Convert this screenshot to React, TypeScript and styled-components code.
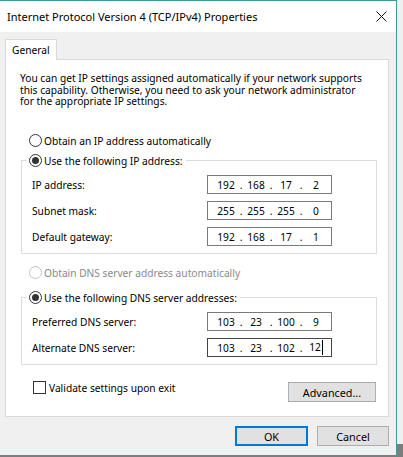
import styled, { createGlobalStyle } from "styled-components";

const GlobalStyle = createGlobalStyle`
  html, body {
    margin: 0;
    padding: 0;
  }
  body {
    min-height: 457px;
    background: linear-gradient(#eef0f0 0, #eef0f0 444px, #7d7d7d 444px);
    font-family: "Noto Sans", "Liberation Sans", sans-serif;
    font-size: 10.2px;
    color: #000;
  }
`;

const Window = styled.div`
  width: 396px;
  height: 454px;
  border-top: 1px solid #3b9a9a;
  border-right: 1px solid #3b9a9a;
  border-bottom: 1px solid #3b9a9a;
  background: #f0f0f0;
  display: flex;
  flex-direction: column;
`;

const TitleBar = styled.div`
  height: 31px;
  flex: 0 0 31px;
  background: #fff;
  display: flex;
  align-items: center;
  justify-content: space-between;
  padding: 0 9px 0 7px;
  box-sizing: border-box;
`;

const Title = styled.span`
  font-size: 11px;
  line-height: 1;
`;

const Body = styled.div`
  flex: 1;
  display: flex;
  flex-direction: column;
  padding: 7px 7px 0 5px;
`;

const TabStrip = styled.div`
  display: flex;
`;

const Tab = styled.div`
  box-sizing: border-box;
  width: 52px;
  height: 21px;
  border: 1px solid #d9d9d9;
  border-bottom: none;
  background: #fff;
  margin-bottom: -1px;
  position: relative;
  z-index: 1;
  padding-left: 6px;
  display: flex;
  align-items: center;
`;

const Panel = styled.div`
  box-sizing: border-box;
  height: 358px;
  border: 1px solid #d9d9d9;
  background: #fff;
  display: flex;
  flex-direction: column;
`;

const Intro = styled.p`
  margin: 13px 0 0 14px;
  line-height: 11.7px;
  white-space: nowrap;
`;

const Choice = styled.label<{ $top: number; $disabled?: boolean }>`
  display: flex;
  align-items: center;
  gap: 2px;
  height: 13px;
  margin: ${(p) => p.$top}px 0 0 23px;
  color: ${(p) => (p.$disabled ? "#8a8a8a" : "#000")};
`;

const Radio = styled.span<{ $checked?: boolean; $disabled?: boolean }>`
  box-sizing: border-box;
  width: 13px;
  height: 13px;
  border-radius: 50%;
  border: 1px solid ${(p) => (p.$disabled ? "#c4c4c4" : "#333")};
  background: #fff;
  display: flex;
  align-items: center;
  justify-content: center;

  &::after {
    content: "";
    width: 7px;
    height: 7px;
    border-radius: 50%;
    background: #333;
    display: ${(p) => (p.$checked ? "block" : "none")};
  }
`;

const Group = styled.fieldset<{ $top: number }>`
  margin: ${(p) => p.$top}px 0 0 15px;
  width: 356px;
  box-sizing: border-box;
  border: 1px solid #dcdcdc;
  padding: 0 0 7px 10px;
  min-width: 0;
`;

const Legend = styled.legend`
  margin-left: -5px;
  padding: 0 3px 0 2px;
  display: flex;
  align-items: center;
  gap: 2px;
  height: 13px;
`;

const Rows = styled.div<{ $top: number }>`
  display: flex;
  flex-direction: column;
  gap: 7px;
  margin-top: ${(p) => p.$top}px;
`;

const Row = styled.div`
  display: flex;
  align-items: center;
  height: 19px;
`;

const FieldLabel = styled.span`
  flex: 0 0 175px;
`;

const IpBox = styled.div<{ $focused?: boolean }>`
  box-sizing: border-box;
  width: 125px;
  height: 19px;
  border: 1px solid ${(p) => (p.$focused ? "#444" : "#7a7a7a")};
  background: #fff;
  display: flex;
  align-items: center;
  padding-left: 6px;
`;

const Octet = styled.span`
  width: 24px;
  text-align: center;
  white-space: nowrap;
`;

const Dot = styled.span`
  width: 6px;
  text-align: center;
`;

const Caret = styled.span`
  display: inline-block;
  width: 1px;
  height: 15px;
  background: #000;
  vertical-align: middle;
  margin-left: 1px;
`;

const BottomRow = styled.div`
  display: flex;
  align-items: flex-start;
  justify-content: space-between;
  margin: 16px 12px 0 27px;
`;

const CheckRow = styled.label`
  display: flex;
  align-items: center;
  gap: 3px;
  height: 13px;
`;

const CheckBox = styled.span`
  box-sizing: border-box;
  width: 13px;
  height: 13px;
  border: 1px solid #333;
  background: #fff;
`;

const Button = styled.button<{ $default?: boolean; $width: number }>`
  box-sizing: border-box;
  width: ${(p) => p.$width}px;
  height: 20px;
  border: ${(p) => (p.$default ? "2px solid #0078d7" : "1px solid #adadad")};
  background: #e1e1e1;
  font-family: inherit;
  font-size: 10.8px;
  color: #000;
  padding: 0;
  margin-top: 1px;
`;

const Footer = styled.div`
  display: flex;
  justify-content: flex-end;
  gap: 9px;
  margin-top: 8px;
`;

function CloseIcon() {
  return (
    <svg width="11" height="11" viewBox="0 0 11 11">
      <path d="M0.5 0.5 L10.5 10.5 M10.5 0.5 L0.5 10.5" stroke="#111" strokeWidth="1" />
    </svg>
  );
}

function IpField({ value, focused }: { value: string; focused?: boolean }) {
  const parts = value.split(".");
  return (
    <IpBox $focused={focused}>
      {parts.map((part, i) => (
        <span key={i} style={{ display: "contents" }}>
          {i > 0 && <Dot>.</Dot>}
          <Octet>
            {part}
            {focused && i === parts.length - 1 && <Caret />}
          </Octet>
        </span>
      ))}
    </IpBox>
  );
}

const ipRows = [
  { label: "IP address:", value: "192.168.17.2" },
  { label: "Subnet mask:", value: "255.255.255.0" },
  { label: "Default gateway:", value: "192.168.17.1" },
];

const dnsRows = [
  { label: "Preferred DNS server:", value: "103.23.100.9" },
  { label: "Alternate DNS server:", value: "103.23.102.12", focused: true },
];

export default function App() {
  return (
    <>
      <GlobalStyle />
      <Window>
        <TitleBar>
          <Title>Internet Protocol Version 4 (TCP/IPv4) Properties</Title>
          <CloseIcon />
        </TitleBar>
        <Body>
          <TabStrip>
            <Tab>General</Tab>
          </TabStrip>
          <Panel>
            <Intro>
              You can get IP settings assigned automatically if your network supports
              <br />
              this capability. Otherwise, you need to ask your network administrator
              <br />
              for the appropriate IP settings.
            </Intro>

            <Choice $top={26}>
              <Radio />
              Obtain an IP address automatically
            </Choice>
            <Group $top={7}>
              <Legend>
                <Radio $checked />
                Use the following IP address:
              </Legend>
              <Rows $top={8}>
                {ipRows.map((r) => (
                  <Row key={r.label}>
                    <FieldLabel>{r.label}</FieldLabel>
                    <IpField value={r.value} />
                  </Row>
                ))}
              </Rows>
            </Group>

            <Choice $top={12} $disabled>
              <Radio $disabled />
              Obtain DNS server address automatically
            </Choice>
            <Group $top={12}>
              <Legend>
                <Radio $checked />
                Use the following DNS server addresses:
              </Legend>
              <Rows $top={8}>
                {dnsRows.map((r) => (
                  <Row key={r.label}>
                    <FieldLabel>{r.label}</FieldLabel>
                    <IpField value={r.value} focused={r.focused} />
                  </Row>
                ))}
              </Rows>
            </Group>

            <BottomRow>
              <CheckRow>
                <CheckBox />
                Validate settings upon exit
              </CheckRow>
              <Button $width={88}>Advanced...</Button>
            </BottomRow>
          </Panel>
          <Footer>
            <Button $default $width={73}>
              OK
            </Button>
            <Button $width={72}>Cancel</Button>
          </Footer>
        </Body>
      </Window>
    </>
  );
}
